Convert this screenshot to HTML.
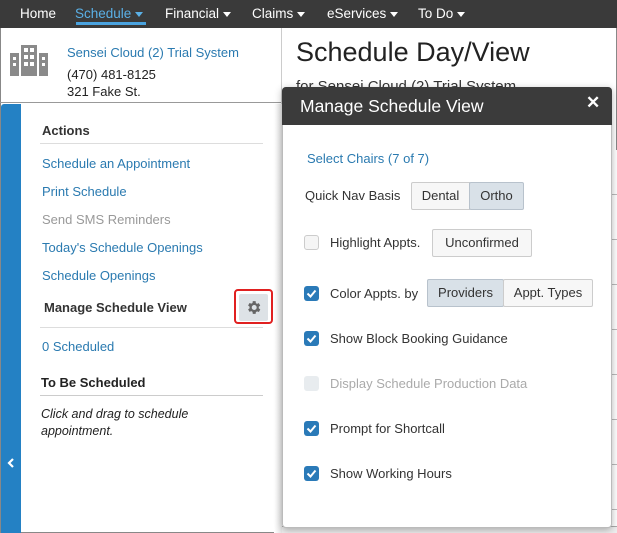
<!DOCTYPE html>
<html><head><style>
*{box-sizing:border-box;margin:0;padding:0}
body{width:617px;height:533px;overflow:hidden;font-family:"Liberation Sans",sans-serif;font-size:13px;color:#333;background:#fff;position:relative}
.abs{position:absolute}
.nav{left:0;top:0;width:617px;height:28px;background:#3a3a3a;color:#fff;font-size:13.5px}
.nav span{position:absolute;top:6px}
.car{display:inline-block;border-left:4px solid transparent;border-right:4px solid transparent;border-top:5px solid #fff;vertical-align:middle;margin-left:4px}
a{color:#2a7ab0;text-decoration:none}
.l{position:absolute;left:42px;font-size:13px}
.cb{position:absolute;left:304px;width:15px;height:15px;border-radius:3px;background:#2a7ab8}
.cb svg{position:absolute;left:2px;top:2px}
.t{position:absolute;left:330px;font-size:13px;color:#333}
.btn{position:absolute;height:28px;border:1px solid #ccc;background:#f7f7f7;font-size:13px;line-height:26px;text-align:center;border-radius:2px}
.on{background:#d9e1e8;border-color:#b8c2cc}
</style></head><body>
<div class="abs" style="left:0;top:0;width:617px;height:533px;border:1px solid #888"></div>
<div class="abs nav">
<span style="left:20px">Home</span>
<span style="left:75px;color:#5ab0e6">Schedule<i class="car" style="border-top-color:#5ab0e6"></i></span>
<div class="abs" style="left:76px;top:22px;width:70px;height:3px;background:#4aa3df"></div>
<span style="left:165px">Financial<i class="car"></i></span>
<span style="left:252px">Claims<i class="car"></i></span>
<span style="left:327px">eServices<i class="car"></i></span>
<span style="left:418px">To Do<i class="car"></i></span>
</div>
<svg class="abs" style="left:10px;top:45px" width="38" height="31" viewBox="0 0 38 31"><g fill="#8a8a8a"><rect x="0" y="8" width="9" height="23"/><rect x="11" y="0" width="16" height="31"/><rect x="29" y="8" width="9" height="23"/></g><g fill="#fff"><rect x="14" y="3" width="4" height="4"/><rect x="20" y="3" width="4" height="4"/><rect x="14" y="10" width="4" height="4"/><rect x="20" y="10" width="4" height="4"/><rect x="14" y="17" width="4" height="4"/><rect x="20" y="17" width="4" height="4"/><rect x="3" y="12" width="3" height="3"/><rect x="3" y="18" width="3" height="3"/><rect x="32" y="12" width="3" height="3"/><rect x="32" y="18" width="3" height="3"/></g></svg>
<a class="abs" style="left:67px;top:45px;font-size:13px">Sensei Cloud (2) Trial System</a>
<div class="abs" style="left:67px;top:67px;font-size:13px;color:#222">(470) 481-8125</div>
<div class="abs" style="left:67px;top:84px;font-size:13px;color:#222">321 Fake St.</div>
<div class="abs" style="left:0;top:102px;width:282px;height:1px;background:#999"></div>
<div class="abs" style="left:281px;top:28px;width:1px;height:505px;background:#ccc"></div>
<div class="abs" style="left:296px;top:37px;font-size:27px;color:#222">Schedule Day/View</div>
<div class="abs" style="left:296px;top:78px;font-size:15px;color:#333">for Sensei Cloud (2) Trial System</div>
<div class="abs" style="left:610px;top:150px;width:7px;height:383px;background:repeating-linear-gradient(#fff 0 44px,#bbb 44px 45px)"></div>
<div class="abs" style="left:282px;top:526px;width:335px;height:7px;background:#eee;border-top:1px solid #aaa"></div>
<div class="abs" style="left:1px;top:104px;width:20px;height:429px;background:#2481c4;border-radius:3px 0 0 0"></div>
<svg class="abs" style="left:7px;top:457px" width="8" height="12" viewBox="0 0 8 12"><path d="M6 2L2 6l4 4" stroke="#fff" stroke-width="2.2" fill="none"/></svg>
<div class="abs" style="left:274px;top:104px;width:8px;height:429px;background:linear-gradient(90deg,#fff,#e6e6e6)"></div>
<div class="l" style="top:123px;font-weight:bold;color:#333">Actions</div>
<div class="abs" style="left:40px;top:143px;width:223px;height:1px;background:#ddd"></div>
<a class="l" style="top:156px">Schedule an Appointment</a>
<a class="l" style="top:184px">Print Schedule</a>
<div class="l" style="top:212px;color:#999">Send SMS Reminders</div>
<a class="l" style="top:240px">Today's Schedule Openings</a>
<a class="l" style="top:268px">Schedule Openings</a>
<div class="l" style="left:44px;top:300px;font-weight:bold;color:#333">Manage Schedule View</div>
<div class="abs" style="left:234px;top:289px;width:39px;height:35px;border:2px solid #e02020;border-radius:4px"></div>
<div class="abs" style="left:239px;top:294px;width:29px;height:27px;background:#dde2e6;border-radius:2px"></div>
<svg class="abs" style="left:245px;top:299px" width="17" height="17" viewBox="0 0 24 24"><path fill="#666" d="M19.4 13a7.5 7.5 0 0 0 0-2l2.1-1.6-2-3.5-2.5 1a7.6 7.6 0 0 0-1.7-1L15 3h-4l-.4 2.6a7.6 7.6 0 0 0-1.7 1l-2.5-1-2 3.5L6.5 11a7.5 7.5 0 0 0 0 2l-2.1 1.6 2 3.5 2.5-1a7.6 7.6 0 0 0 1.7 1L11 21h4l.4-2.6a7.6 7.6 0 0 0 1.7-1l2.5 1 2-3.5zM13 15.5a3.5 3.5 0 1 1 0-7 3.5 3.5 0 0 1 0 7z"/></svg>
<div class="abs" style="left:40px;top:327px;width:223px;height:1px;background:#ddd"></div>
<a class="l" style="top:339px">0 Scheduled</a>
<div class="l" style="left:41px;top:375px;font-weight:bold;color:#222">To Be Scheduled</div>
<div class="abs" style="left:40px;top:395px;width:223px;height:1px;background:#ccc"></div>
<div class="l" style="left:41px;top:406px;font-style:italic;color:#222;line-height:17px;font-size:12.5px">Click and drag to schedule<br>appointment.</div>
<div class="abs" style="left:282px;top:87px;width:330px;height:441px;background:#fff;border:1px solid #bbb;border-radius:4px;box-shadow:0 2px 8px rgba(0,0,0,.3)"></div>
<div class="abs" style="left:282px;top:87px;width:330px;height:38px;background:#3b3b3b;border-radius:4px 4px 0 0"></div>
<div class="abs" style="left:300px;top:96px;color:#fff;font-size:17.5px">Manage Schedule View</div>
<div class="abs" style="left:586px;top:93px;color:#fff;font-size:17px;font-weight:bold">✕</div>
<a class="abs" style="left:307px;top:151px;font-size:13px">Select Chairs (7 of 7)</a>
<div class="abs" style="left:305px;top:188px;font-size:13px">Quick Nav Basis</div>
<div class="btn" style="left:411px;top:182px;width:59px;border-radius:2px 0 0 2px">Dental</div>
<div class="btn on" style="left:469px;top:182px;width:55px">Ortho</div>
<div class="cb" style="top:235px;background:#f5f5f5;border:1px solid #ccc"></div>
<div class="t" style="top:235px">Highlight Appts.</div>
<div class="btn" style="left:432px;top:229px;width:100px">Unconfirmed</div>
<div class="cb" style="top:286px"><svg width="11" height="11" viewBox="0 0 11 11"><path d="M1.5 5.5l3 3 5-6" stroke="#fff" stroke-width="2" fill="none"/></svg></div>
<div class="t" style="top:286px">Color Appts. by</div>
<div class="btn on" style="left:427px;top:279px;width:77px">Providers</div>
<div class="btn" style="left:503px;top:279px;width:90px">Appt. Types</div>
<div class="cb" style="top:331px"><svg width="11" height="11" viewBox="0 0 11 11"><path d="M1.5 5.5l3 3 5-6" stroke="#fff" stroke-width="2" fill="none"/></svg></div>
<div class="t" style="top:331px">Show Block Booking Guidance</div>
<div class="cb" style="top:376px;background:#e8ecef"></div>
<div class="t" style="top:376px;color:#aaa">Display Schedule Production Data</div>
<div class="cb" style="top:421px"><svg width="11" height="11" viewBox="0 0 11 11"><path d="M1.5 5.5l3 3 5-6" stroke="#fff" stroke-width="2" fill="none"/></svg></div>
<div class="t" style="top:421px">Prompt for Shortcall</div>
<div class="cb" style="top:466px"><svg width="11" height="11" viewBox="0 0 11 11"><path d="M1.5 5.5l3 3 5-6" stroke="#fff" stroke-width="2" fill="none"/></svg></div>
<div class="t" style="top:466px">Show Working Hours</div>
</body></html>
